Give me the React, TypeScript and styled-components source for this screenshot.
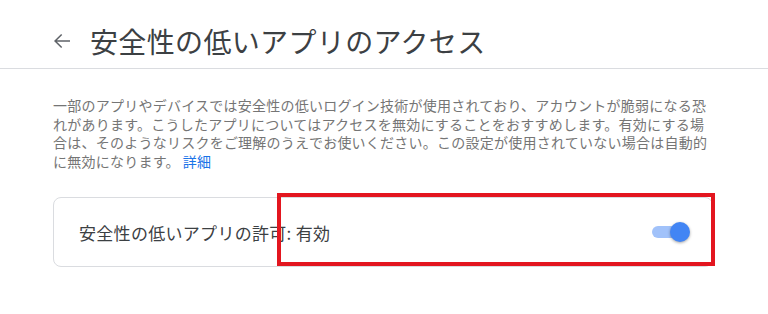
import React from 'react';
import styled, { createGlobalStyle } from 'styled-components';

const GlobalStyle = createGlobalStyle`
  html, body {
    margin: 0;
    padding: 0;
    background: #ffffff;
  }

  body {
    font-family: "Noto Sans CJK JP", "Noto Sans", sans-serif;
  }
`;

const Page = styled.div`
  position: relative;
  width: 768px;
  height: 314px;
  overflow: hidden;
  background: #ffffff;
`;

const Header = styled.header`
  box-sizing: border-box;
  height: 69px;
  padding: 13px 0 0 50px;
  display: flex;
  align-items: center;
  gap: 16px;
  border-bottom: 1px solid #dadce0;
`;

const BackButton = styled.button`
  width: 24px;
  height: 24px;
  padding: 0;
  border: none;
  background: none;
  display: flex;
  align-items: center;
  justify-content: center;
  cursor: pointer;

  svg {
    fill: #5f6368;
  }
`;

const Title = styled.h1`
  margin: 0;
  font-size: 28px;
  font-weight: 400;
  letter-spacing: 0.35px;
  line-height: 36px;
  color: #3c4043;
`;

const Content = styled.main`
  padding: 27px 0 0 53px;
`;

const Description = styled.p`
  margin: 0;
  width: 660px;
  font-size: 14px;
  letter-spacing: 0.24px;
  line-height: 18.5px;
  color: #757575;
`;

const Link = styled.a`
  color: #1a73e8;
  text-decoration: none;
  margin-left: 3px;
`;

const Card = styled.div`
  box-sizing: border-box;
  margin-top: 27px;
  width: 660px;
  height: 70px;
  padding: 0 22px 0 25px;
  display: flex;
  align-items: center;
  justify-content: space-between;
  border: 1px solid #dadce0;
  border-radius: 8px;
`;

const Label = styled.span`
  font-size: 17px;
  letter-spacing: 0.3px;
  color: #3c4043;
`;

const Switch = styled.div<{ $on: boolean }>`
  position: relative;
  width: 38px;
  height: 20px;

  &::before {
    content: '';
    position: absolute;
    left: 0;
    top: 4px;
    width: 34px;
    height: 12px;
    border-radius: 6px;
    background: ${(p) => (p.$on ? '#a1c2fa' : '#bdc1c6')};
  }

  &::after {
    content: '';
    position: absolute;
    top: 0;
    left: ${(p) => (p.$on ? '18px' : '0')};
    width: 20px;
    height: 20px;
    border-radius: 50%;
    background: ${(p) => (p.$on ? '#4285f4' : '#ffffff')};
    box-shadow: 0 1px 3px rgba(0, 0, 0, 0.35);
  }
`;

const Highlight = styled.div`
  position: absolute;
  left: 277px;
  top: 193px;
  width: 438px;
  height: 73px;
  box-sizing: border-box;
  border: 4px solid #e3161f;
  pointer-events: none;
`;

const App = () => {
  return (
    <Page>
      <GlobalStyle />
      <Header>
        <BackButton aria-label="戻る">
          <svg width="24" height="24" viewBox="0 0 24 24">
            <path d="M20 11.25H6.9l5.3-5.3-1.06-1.06L4 12l7.14 7.11 1.06-1.06-5.3-5.3H20z" />
          </svg>
        </BackButton>
        <Title>安全性の低いアプリのアクセス</Title>
      </Header>

      <Content>
        <Description>
          一部のアプリやデバイスでは安全性の低いログイン技術が使用されており、アカウントが脆弱になる恐れがあります。こうしたアプリについてはアクセスを無効にすることをおすすめします。有効にする場合は、そのようなリスクをご理解のうえでお使いください。この設定が使用されていない場合は自動的に無効になります。
          <Link href="#">詳細</Link>
        </Description>

        <Card>
          <Label>安全性の低いアプリの許可: 有効</Label>
          <Switch $on />
        </Card>
      </Content>

      <Highlight />
    </Page>
  );
};

export default App;
